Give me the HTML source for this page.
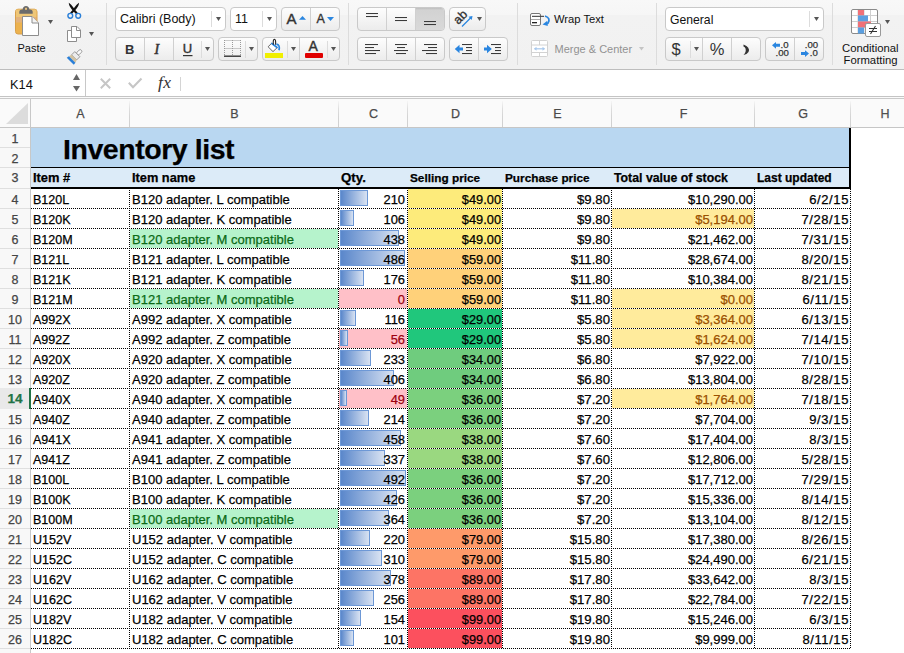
<!DOCTYPE html><html><head><meta charset="utf-8"><title>Inventory list</title><style>
body{margin:0;width:904px;height:653px;overflow:hidden;position:relative;background:#fff;font-family:"Liberation Sans",sans-serif;}
.a{position:absolute;}
.t{white-space:nowrap;line-height:20px;height:20px;-webkit-text-stroke:0.25px currentColor;}
.btn{position:absolute;box-sizing:border-box;border:1px solid #c9c9c9;border-radius:4px;background:linear-gradient(#fdfdfd,#ececec);}
.box{position:absolute;box-sizing:border-box;border:1px solid #c9c9c9;border-radius:4px;background:#fff;}
.dv{position:absolute;width:1px;background:#d0d0d0;}
svg{position:absolute;overflow:visible;}
</style></head><body>
<div class="a" style="left:0px;top:0px;width:904px;height:69px;background:linear-gradient(#f8f8f8 0,#f6f6f6 15px,#f2f2f2 15px,#f1f1f1 100%);"></div>
<div class="a" style="left:0px;top:69px;width:904px;height:1px;background:#bdbdbd;"></div>
<div class="a" style="left:106px;top:3px;width:1px;height:62px;background:#dcdcdc;"></div>
<div class="a" style="left:348px;top:3px;width:1px;height:62px;background:#dcdcdc;"></div>
<div class="a" style="left:517px;top:3px;width:1px;height:62px;background:#dcdcdc;"></div>
<div class="a" style="left:656px;top:3px;width:1px;height:62px;background:#dcdcdc;"></div>
<div class="a" style="left:832px;top:3px;width:1px;height:62px;background:#dcdcdc;"></div>
<div class="box" style="left:115px;top:7px;width:111px;height:24px;"></div>
<div class="box" style="left:230px;top:7px;width:47px;height:24px;"></div>
<div class="btn" style="left:281px;top:7px;width:59px;height:24px;"></div>
<div class="btn" style="left:115px;top:37px;width:99px;height:24px;"></div>
<div class="btn" style="left:218px;top:37px;width:40px;height:24px;"></div>
<div class="btn" style="left:262px;top:37px;width:78px;height:24px;"></div>
<div class="btn" style="left:357px;top:7px;width:88px;height:24px;"></div>
<div class="a" style="left:416px;top:8px;width:28px;height:22px;background:linear-gradient(#bdbdbd 0,#d2d2d2 2px,#d9d9d9 100%);border-radius:0 3px 3px 0;"></div>
<div class="btn" style="left:449px;top:7px;width:37px;height:24px;"></div>
<div class="btn" style="left:357px;top:37px;width:88px;height:24px;"></div>
<div class="btn" style="left:449px;top:37px;width:59px;height:24px;"></div>
<div class="box" style="left:665px;top:7px;width:159px;height:24px;"></div>
<div class="btn" style="left:665px;top:37px;width:96px;height:24px;"></div>
<div class="btn" style="left:765px;top:37px;width:59px;height:24px;"></div>
<div class="dv" style="left:144px;top:38px;height:22px;"></div>
<div class="dv" style="left:173px;top:38px;height:22px;"></div>
<div class="dv" style="left:310px;top:8px;height:22px;"></div>
<div class="dv" style="left:299px;top:38px;height:22px;"></div>
<div class="dv" style="left:386px;top:8px;height:22px;"></div>
<div class="dv" style="left:415px;top:8px;height:22px;"></div>
<div class="dv" style="left:386px;top:38px;height:22px;"></div>
<div class="dv" style="left:415px;top:38px;height:22px;"></div>
<div class="dv" style="left:478px;top:38px;height:22px;"></div>
<div class="dv" style="left:702px;top:38px;height:22px;"></div>
<div class="dv" style="left:731px;top:38px;height:22px;"></div>
<div class="dv" style="left:794px;top:38px;height:22px;"></div>
<div class="dv" style="left:201px;top:41px;height:17px;background:#dcdcdc"></div>
<div class="dv" style="left:245px;top:41px;height:17px;background:#dcdcdc"></div>
<div class="dv" style="left:287px;top:41px;height:17px;background:#dcdcdc"></div>
<div class="dv" style="left:327px;top:41px;height:17px;background:#dcdcdc"></div>
<div class="dv" style="left:690px;top:41px;height:17px;background:#dcdcdc"></div>
<div class="dv" style="left:211px;top:11px;height:16px;background:#dcdcdc"></div>
<div class="dv" style="left:262px;top:11px;height:16px;background:#dcdcdc"></div>
<div class="dv" style="left:809px;top:11px;height:16px;background:#dcdcdc"></div>
<svg style="left:0;top:0" width="904" height="69" viewBox="0 0 904 69">
<g fill="#555">
<polygon points="48,20 53,20 50.5,24"/>
<polygon points="89,32 94,32 91.5,36"/>
<polygon points="216,17 221,17 218.5,21"/>
<polygon points="267,17 272,17 269.5,21"/>
<polygon points="205,47 210,47 207.5,51"/>
<polygon points="249,47 254,47 251.5,51"/>
<polygon points="291,47 296,47 293.5,51"/>
<polygon points="331,47 336,47 333.5,51"/>
<polygon points="477,17 482,17 479.5,21"/>
<polygon points="694,47 699,47 696.5,51"/>
<polygon points="814,17 819,17 816.5,21"/>
<polygon points="885,20 890,20 887.5,24"/>
</g>
<polygon points="639,47 644,47 641.5,50.5" fill="#c4c4c4"/>
<!-- paste clipboard -->
<rect x="15.5" y="9.2" width="21.5" height="24.8" rx="2.5" fill="#ecb24e" stroke="#d9a04a" stroke-width="1"/>
<rect x="16" y="9.5" width="20.5" height="7.5" fill="#eec677"/>
<rect x="16" y="17" width="20.5" height="5.5" fill="#e2b27c"/>
<path d="M19.3,12.3 Q19.3,9.6 22,9.6 L22.6,9.6 Q23,6 26,6 Q29,6 29.4,9.6 L30,9.6 Q32.7,9.6 32.7,12.3 L32.7,13.8 L19.3,13.8 Z" fill="#6b6b6b"/>
<rect x="25" y="7.8" width="2" height="2" fill="#e8c07a"/>
<path d="M22.5,16.5 L32,16.5 L38.5,23 L38.5,35.5 L22.5,35.5 Z" fill="#fff" stroke="#8d8d8d" stroke-width="1"/>
<path d="M32,16.5 L32,23 L38.5,23" fill="#f3f3f3" stroke="#8d8d8d" stroke-width="1"/>
<!-- scissors -->
<path d="M68.8,2.8 C68.8,6.2 71.4,9.2 76,13.9 L77.7,12.7 C74,9 72.4,5.4 68.8,2.8 Z" fill="#111"/><path d="M79,2.8 C79,6.2 76.4,9.2 71.8,13.9 L70.1,12.7 C73.8,9 75.4,5.4 79,2.8 Z" fill="#111"/>
<circle cx="70.3" cy="15.8" r="2.4" fill="none" stroke="#2a7fd8" stroke-width="1.4"/>
<circle cx="78.2" cy="15.8" r="2.4" fill="none" stroke="#2a7fd8" stroke-width="1.4"/>
<!-- copy -->
<path d="M67.5,30.5 L76.5,30.5 L76.5,41.5 L67.5,41.5 Z" fill="#fff" stroke="#8d8d8d"/>
<path d="M71.5,26.5 L77,26.5 L80.5,30 L80.5,37.5 L71.5,37.5 Z" fill="#fff" stroke="#8d8d8d"/>
<path d="M76.5,26.8 L76.5,30.5 L80.2,30.5" fill="none" stroke="#8d8d8d"/>
<!-- brush -->
<g transform="translate(81.3,50.2) rotate(45)">
<rect x="-1.6" y="0" width="3.2" height="5.8" rx="1.4" fill="#fafafa" stroke="#8a8a8a" stroke-width="0.8"/>
<rect x="-3.6" y="5.6" width="7.2" height="4.6" fill="#ececec" stroke="#8a8a8a" stroke-width="0.8"/>
<path d="M-3.8,10.2 L3.8,10.2 L4.6,13 L-4.6,13 Z" fill="#d3c29f"/>
<path d="M-4.6,13 L4.6,13 L5,15.6 L-5,15.6 Z" fill="#2a7fd8"/>
</g>
<!-- B I U -->
<text x="125" y="53.5" font-family="Liberation Sans" font-weight="bold" font-size="13" fill="#333">B</text>
<text x="154.5" y="53.5" font-family="Liberation Serif" font-style="italic" font-size="14" fill="#333" stroke="#333" stroke-width="0.5">I</text>
<text x="182.8" y="53" font-family="Liberation Sans" font-size="13" fill="#333" stroke="#333" stroke-width="0.4">U</text>
<rect x="183" y="55" width="9.5" height="1.2" fill="#333"/>
<!-- borders icon -->
<path d="M224.5,40 V56 M240.5,40 V56 M224.5,40.5 H240.5 M232.5,40 V56 M224.5,48.5 H240.5" stroke="#9a9a9a" stroke-width="1" stroke-dasharray="1 1" fill="none"/>
<rect x="224" y="55.5" width="17" height="1.4" fill="#333"/>
<!-- A grow / shrink -->
<text x="286.5" y="24" font-family="Liberation Sans" font-size="15" fill="#333" stroke="#333" stroke-width="0.4">A</text>
<polygon points="299,19.8 306,19.8 302.5,16" fill="#2a86e0"/>
<text x="316.5" y="23" font-family="Liberation Sans" font-size="12.5" fill="#333" stroke="#333" stroke-width="0.35">A</text>
<polygon points="327,17 334,17 330.5,21" fill="#2a86e0"/>
<!-- fill bucket -->
<path d="M271.7,43.2 L277.2,47.6 L273,51.6 L268.1,46.8 Z" fill="#fff" stroke="#555" stroke-width="0.9"/>
<path d="M271.3,43.1 L277.5,47.9" stroke="#2a86e0" stroke-width="1.8"/>
<path d="M273.4,44.6 Q272.8,39.2 274.4,39.2 Q276,39.3 275.6,44.8" stroke="#222" stroke-width="1.1" fill="none"/>
<path d="M276.4,44.1 Q280.3,44.8 279,50.2" stroke="#2a86e0" stroke-width="1.7" fill="none"/>
<rect x="265" y="53" width="18" height="5" fill="#f0ef00"/>
<text x="308.5" y="51" font-family="Liberation Sans" font-size="14" fill="#333" stroke="#333" stroke-width="0.4">A</text>
<rect x="305" y="53" width="18" height="5" rx="1" fill="#e00000"/>
<!-- valign -->
<g fill="#3a3a3a">
<rect x="366" y="13" width="12" height="1.05"/><rect x="366" y="16" width="12" height="1.05"/>
<rect x="395" y="17" width="12" height="1.05"/><rect x="395" y="20" width="12" height="1.05"/>
<rect x="424" y="21" width="12" height="1.05"/><rect x="424" y="24" width="12" height="1.05"/>
<rect x="365" y="44" width="13" height="1.05"/><rect x="365" y="47" width="9" height="1.05"/><rect x="365" y="50" width="15" height="1.05"/><rect x="365" y="53" width="11" height="1.05"/>
<rect x="395" y="44" width="12" height="1.05"/><rect x="397" y="47" width="8" height="1.05"/><rect x="394" y="50" width="14" height="1.05"/><rect x="396" y="53" width="10" height="1.05"/>
<rect x="424" y="44" width="13" height="1.05"/><rect x="428" y="47" width="9" height="1.05"/><rect x="422" y="50" width="15" height="1.05"/><rect x="426" y="53" width="11" height="1.05"/>
<rect x="462" y="44" width="10" height="1.05"/><rect x="466" y="47" width="6" height="1.05"/><rect x="466" y="50" width="6" height="1.05"/><rect x="462" y="53" width="10" height="1.05"/>
<rect x="491" y="44" width="10" height="1.05"/><rect x="495" y="47" width="6" height="1.05"/><rect x="495" y="50" width="6" height="1.05"/><rect x="491" y="53" width="10" height="1.05"/>
</g>
<!-- orientation ab -->
<text x="0" y="0" font-family="Liberation Sans" font-size="12.5" fill="#333" stroke="#333" stroke-width="0.3" transform="translate(458.3,25) rotate(-45)">ab</text>
<path d="M462,26.5 L471.5,17" stroke="#2a86e0" stroke-width="1.2"/>
<polygon points="472.5,16 468.5,16.8 471.7,20" fill="#2a86e0"/>
<!-- indent arrows -->
<polygon points="454.8,49 459.5,44.8 459.5,47.5 463,47.5 463,50.5 459.5,50.5 459.5,53.2" fill="#2a86e0"/>
<polygon points="491.8,49 487,44.8 487,47.5 484,47.5 484,50.5 487,50.5 487,53.2" fill="#2a86e0"/>
<!-- wrap text icon -->
<rect x="530.5" y="13.5" width="10" height="12" rx="1.5" fill="#fff" stroke="#777"/>
<rect x="531" y="19" width="9" height="1" fill="#aaa"/>
<rect x="532" y="15.8" width="12" height="1.1" fill="#444"/>
<rect x="532" y="22" width="5" height="1.3" fill="#222"/>
<path d="M545,16 Q551,18 548,23 L546.5,24" stroke="#2a86e0" stroke-width="1.8" fill="none"/>
<polygon points="542.5,24.5 547,21 547.8,26" fill="#2a86e0"/>
<text x="554" y="23" font-family="Liberation Sans" font-size="11.2" fill="#111">Wrap Text</text>
<!-- merge icon -->
<rect x="531.5" y="40.5" width="16" height="16" rx="1" fill="#fff" stroke="#d2d2d2"/>
<path d="M532,45 H547 M532,52.5 H547 M539.5,41 V45 M539.5,52.5 V56" stroke="#d2d2d2"/>
<path d="M534.5,48.8 H544.5" stroke="#a8c8ec" stroke-width="1.2"/>
<polygon points="534,48.8 536.5,46.8 536.5,50.8" fill="#a8c8ec"/>
<polygon points="545,48.8 542.5,46.8 542.5,50.8" fill="#a8c8ec"/>
<text x="554.5" y="52.7" font-family="Liberation Sans" font-size="11" fill="#929292">Merge &amp; Center</text>
<!-- number group -->
<text x="671.5" y="55" font-family="Liberation Sans" font-size="16.5" fill="#333">$</text>
<text x="709.8" y="55.2" font-family="Liberation Sans" font-size="16.5" fill="#333">%</text>
<path d="M743.5,44.5 Q750.5,47 748.5,52 Q747,54.5 743.5,55 Q746.5,52 745.5,48.5 Q745,47 743.5,46.5 Z" fill="#333"/>
<!-- decimals -->
<polygon points="772,45.3 776,41.9 776,43.8 780,43.8 780,46.8 776,46.8 776,48.7" fill="#2a86e0"/>
<polygon points="809,53.6 805,50.2 805,52.1 801,52.1 801,55.1 805,55.1 805,57" fill="#2a86e0"/>
<g font-family="Liberation Sans" font-size="9.6" fill="#333" stroke="#333" stroke-width="0.25">
<text x="780.6" y="47.8">.0</text>
<text x="775.6" y="56.1">.00</text>
<text x="804.8" y="47.8">.00</text>
<text x="809.8" y="56.1">.0</text>
</g>
<!-- conditional formatting icon -->
<rect x="851.5" y="9.5" width="26" height="24" rx="1.5" fill="#fff" stroke="#8a8a8a"/>
<path d="M858,10 V33 M864,10 V33 M870.5,10 V33 M852,15.5 H877 M852,21.5 H877 M852,27.5 H877" stroke="#cfcfcf" stroke-width="1"/>
<rect x="858" y="10" width="6" height="5.5" fill="#f07178"/>
<rect x="858" y="15.5" width="10" height="6" fill="#5b9fe0"/>
<rect x="858" y="21.5" width="13" height="6" fill="#f07178"/>
<rect x="858" y="27.5" width="6" height="6" fill="#5b9fe0"/>
<rect x="865.5" y="23.5" width="15" height="13" rx="1.5" fill="#fff" stroke="#999"/>
<path d="M869,28.5 H877 M869,31.5 H877 M875.5,26 L870.5,34" stroke="#333" stroke-width="1.1"/>
<g font-family="Liberation Sans" font-size="11.3" fill="#111">
<text x="842" y="52.2">Conditional</text>
<text x="843.5" y="64">Formatting</text>
</g>
<text x="17.5" y="52" font-family="Liberation Sans" font-size="11" fill="#111">Paste</text>
</svg>
<div class="a" style="left:120px;top:7px;font-size:12.5px;line-height:24px;color:#111;">Calibri (Body)</div>
<div class="a" style="left:235px;top:7px;font-size:12.5px;line-height:24px;color:#111;">11</div>
<div class="a" style="left:670px;top:8px;font-size:12.2px;line-height:24px;color:#111;">General</div>

<div class="a" style="left:0px;top:70px;width:904px;height:26px;background:#fff;"></div>
<div class="a" style="left:85px;top:70px;width:1px;height:26px;background:#c8c8c8;"></div>
<div class="a" style="left:0px;top:96px;width:904px;height:1px;background:#c4c4c4;"></div>
<div class="a" style="left:0px;top:97px;width:904px;height:1px;background:#fafafa;"></div>
<div class="a" style="left:0px;top:98px;width:904px;height:1px;background:#c9c9c9;"></div>
<div class="a" style="left:10px;top:75px;font-size:12.8px;line-height:20px;color:#111;">K14</div>
<svg style="left:0;top:0" width="904" height="100">
<polygon points="73,80 80,80 76.5,74" fill="#666"/>
<polygon points="73,86 80,86 76.5,91.5" fill="#666"/>
<path d="M100.8,78.8 L110.2,88.2 M110.2,78.8 L100.8,88.2" stroke="#c6c6c6" stroke-width="2"/>
<path d="M128.8,82.8 L133,87.2 L141.5,78.6" stroke="#c6c6c6" stroke-width="2.1" fill="none"/>
<text x="158" y="87.5" font-family="Liberation Serif" font-style="italic" font-size="17.5" letter-spacing="0.3" fill="#333">fx</text>
<rect x="180" y="77" width="1" height="14" fill="#d4d4d4"/>
</svg>

<div class="a" style="left:0px;top:99px;width:904px;height:28px;background:#fafafa;"></div>
<div class="a" style="left:0px;top:127px;width:904px;height:1px;background:#c6c6c6;"></div>
<div class="a" style="left:30px;top:101px;width:1px;height:26px;background:linear-gradient(#f6f6f6,#dedede 30%,#d4d4d4 60%,#d0d0d0);"></div>
<div class="a" style="left:129px;top:101px;width:1px;height:26px;background:linear-gradient(#f6f6f6,#dedede 30%,#d4d4d4 60%,#d0d0d0);"></div>
<div class="a" style="left:338px;top:101px;width:1px;height:26px;background:linear-gradient(#f6f6f6,#dedede 30%,#d4d4d4 60%,#d0d0d0);"></div>
<div class="a" style="left:407px;top:101px;width:1px;height:26px;background:linear-gradient(#f6f6f6,#dedede 30%,#d4d4d4 60%,#d0d0d0);"></div>
<div class="a" style="left:502px;top:101px;width:1px;height:26px;background:linear-gradient(#f6f6f6,#dedede 30%,#d4d4d4 60%,#d0d0d0);"></div>
<div class="a" style="left:611px;top:101px;width:1px;height:26px;background:linear-gradient(#f6f6f6,#dedede 30%,#d4d4d4 60%,#d0d0d0);"></div>
<div class="a" style="left:754px;top:101px;width:1px;height:26px;background:linear-gradient(#f6f6f6,#dedede 30%,#d4d4d4 60%,#d0d0d0);"></div>
<div class="a" style="left:850px;top:101px;width:1px;height:26px;background:linear-gradient(#f6f6f6,#dedede 30%,#d4d4d4 60%,#d0d0d0);"></div>
<svg style="left:0;top:99px" width="30" height="28"><polygon points="28,4 28,25 6,25" fill="#dcdcdc"/></svg>
<div class="a t" style="left:31px;top:104px;font-size:12.5px;color:#4a4a4a;font-weight:normal;width:99px;text-align:center;">A</div>
<div class="a t" style="left:130px;top:104px;font-size:12.5px;color:#4a4a4a;font-weight:normal;width:209px;text-align:center;">B</div>
<div class="a t" style="left:339px;top:104px;font-size:12.5px;color:#4a4a4a;font-weight:normal;width:69px;text-align:center;">C</div>
<div class="a t" style="left:408px;top:104px;font-size:12.5px;color:#4a4a4a;font-weight:normal;width:95px;text-align:center;">D</div>
<div class="a t" style="left:503px;top:104px;font-size:12.5px;color:#4a4a4a;font-weight:normal;width:109px;text-align:center;">E</div>
<div class="a t" style="left:612px;top:104px;font-size:12.5px;color:#4a4a4a;font-weight:normal;width:143px;text-align:center;">F</div>
<div class="a t" style="left:755px;top:104px;font-size:12.5px;color:#4a4a4a;font-weight:normal;width:96px;text-align:center;">G</div>
<div class="a t" style="left:850px;top:104px;font-size:12.5px;color:#505050;font-weight:normal;width:70px;text-align:center;">H</div>
<div class="a" style="left:0px;top:128px;width:30px;height:525px;background:#f8f8f8;"></div>
<div class="a" style="left:30px;top:99px;width:1px;height:554px;background:#c8c8c8;"></div>
<div class="a" style="left:0px;top:147px;width:30px;height:1px;background:#dfdfdf;"></div>
<div class="a" style="left:0px;top:167px;width:30px;height:1px;background:#dfdfdf;"></div>
<div class="a" style="left:0px;top:188px;width:30px;height:1px;background:#dfdfdf;"></div>
<div class="a" style="left:0px;top:208px;width:30px;height:1px;background:#dfdfdf;"></div>
<div class="a" style="left:0px;top:228px;width:30px;height:1px;background:#dfdfdf;"></div>
<div class="a" style="left:0px;top:248px;width:30px;height:1px;background:#dfdfdf;"></div>
<div class="a" style="left:0px;top:268px;width:30px;height:1px;background:#dfdfdf;"></div>
<div class="a" style="left:0px;top:288px;width:30px;height:1px;background:#dfdfdf;"></div>
<div class="a" style="left:0px;top:308px;width:30px;height:1px;background:#dfdfdf;"></div>
<div class="a" style="left:0px;top:328px;width:30px;height:1px;background:#dfdfdf;"></div>
<div class="a" style="left:0px;top:348px;width:30px;height:1px;background:#dfdfdf;"></div>
<div class="a" style="left:0px;top:368px;width:30px;height:1px;background:#dfdfdf;"></div>
<div class="a" style="left:0px;top:388px;width:30px;height:1px;background:#dfdfdf;"></div>
<div class="a" style="left:0px;top:408px;width:30px;height:1px;background:#dfdfdf;"></div>
<div class="a" style="left:0px;top:428px;width:30px;height:1px;background:#dfdfdf;"></div>
<div class="a" style="left:0px;top:448px;width:30px;height:1px;background:#dfdfdf;"></div>
<div class="a" style="left:0px;top:468px;width:30px;height:1px;background:#dfdfdf;"></div>
<div class="a" style="left:0px;top:488px;width:30px;height:1px;background:#dfdfdf;"></div>
<div class="a" style="left:0px;top:508px;width:30px;height:1px;background:#dfdfdf;"></div>
<div class="a" style="left:0px;top:528px;width:30px;height:1px;background:#dfdfdf;"></div>
<div class="a" style="left:0px;top:548px;width:30px;height:1px;background:#dfdfdf;"></div>
<div class="a" style="left:0px;top:568px;width:30px;height:1px;background:#dfdfdf;"></div>
<div class="a" style="left:0px;top:588px;width:30px;height:1px;background:#dfdfdf;"></div>
<div class="a" style="left:0px;top:608px;width:30px;height:1px;background:#dfdfdf;"></div>
<div class="a" style="left:0px;top:628px;width:30px;height:1px;background:#dfdfdf;"></div>
<div class="a" style="left:0px;top:648px;width:30px;height:1px;background:#dfdfdf;"></div>
<div class="a t" style="left:0px;top:129px;font-size:12.5px;color:#454545;font-weight:normal;width:30px;text-align:center;">1</div>
<div class="a t" style="left:0px;top:149px;font-size:12.5px;color:#454545;font-weight:normal;width:30px;text-align:center;">2</div>
<div class="a t" style="left:0px;top:168px;font-size:12.5px;color:#454545;font-weight:normal;width:30px;text-align:center;">3</div>
<div class="a t" style="left:0px;top:190px;font-size:12.5px;color:#454545;font-weight:normal;width:30px;text-align:center;">4</div>
<div class="a t" style="left:0px;top:210px;font-size:12.5px;color:#454545;font-weight:normal;width:30px;text-align:center;">5</div>
<div class="a t" style="left:0px;top:230px;font-size:12.5px;color:#454545;font-weight:normal;width:30px;text-align:center;">6</div>
<div class="a t" style="left:0px;top:250px;font-size:12.5px;color:#454545;font-weight:normal;width:30px;text-align:center;">7</div>
<div class="a t" style="left:0px;top:270px;font-size:12.5px;color:#454545;font-weight:normal;width:30px;text-align:center;">8</div>
<div class="a t" style="left:0px;top:290px;font-size:12.5px;color:#454545;font-weight:normal;width:30px;text-align:center;">9</div>
<div class="a t" style="left:0px;top:310px;font-size:12.5px;color:#454545;font-weight:normal;width:30px;text-align:center;">10</div>
<div class="a t" style="left:0px;top:330px;font-size:12.5px;color:#454545;font-weight:normal;width:30px;text-align:center;">11</div>
<div class="a t" style="left:0px;top:350px;font-size:12.5px;color:#454545;font-weight:normal;width:30px;text-align:center;">12</div>
<div class="a t" style="left:0px;top:370px;font-size:12.5px;color:#454545;font-weight:normal;width:30px;text-align:center;">13</div>
<div class="a" style="left:0px;top:388px;width:30px;height:21px;background:#e9e9e9;"></div>
<div class="a" style="left:29px;top:388px;width:2px;height:21px;background:#217346;"></div>
<div class="a t" style="left:0px;top:389px;font-size:13.5px;color:#217346;font-weight:bold;width:30px;text-align:center;">14</div>
<div class="a t" style="left:0px;top:410px;font-size:12.5px;color:#454545;font-weight:normal;width:30px;text-align:center;">15</div>
<div class="a t" style="left:0px;top:430px;font-size:12.5px;color:#454545;font-weight:normal;width:30px;text-align:center;">16</div>
<div class="a t" style="left:0px;top:450px;font-size:12.5px;color:#454545;font-weight:normal;width:30px;text-align:center;">17</div>
<div class="a t" style="left:0px;top:470px;font-size:12.5px;color:#454545;font-weight:normal;width:30px;text-align:center;">18</div>
<div class="a t" style="left:0px;top:490px;font-size:12.5px;color:#454545;font-weight:normal;width:30px;text-align:center;">19</div>
<div class="a t" style="left:0px;top:510px;font-size:12.5px;color:#454545;font-weight:normal;width:30px;text-align:center;">20</div>
<div class="a t" style="left:0px;top:530px;font-size:12.5px;color:#454545;font-weight:normal;width:30px;text-align:center;">21</div>
<div class="a t" style="left:0px;top:550px;font-size:12.5px;color:#454545;font-weight:normal;width:30px;text-align:center;">22</div>
<div class="a t" style="left:0px;top:570px;font-size:12.5px;color:#454545;font-weight:normal;width:30px;text-align:center;">23</div>
<div class="a t" style="left:0px;top:590px;font-size:12.5px;color:#454545;font-weight:normal;width:30px;text-align:center;">24</div>
<div class="a t" style="left:0px;top:610px;font-size:12.5px;color:#454545;font-weight:normal;width:30px;text-align:center;">25</div>
<div class="a t" style="left:0px;top:630px;font-size:12.5px;color:#454545;font-weight:normal;width:30px;text-align:center;">26</div>
<div class="a" style="left:31px;top:128px;width:818px;height:39px;background:#b9d7f1;"></div>
<div class="a" style="left:31px;top:167px;width:819px;height:1px;background:#000;"></div>
<div class="a" style="left:31px;top:168px;width:818px;height:19px;background:#dcebf8;"></div>
<div class="a" style="left:31px;top:187px;width:820px;height:2px;background:#000;"></div>
<div class="a" style="left:849px;top:128px;width:2px;height:61px;background:#000;"></div>
<div class="a t" style="left:63px;top:132px;font-size:28.5px;color:#000;font-weight:bold;line-height:34px;height:34px;letter-spacing:-0.45px;">Inventory list</div>
<div class="a t" style="left:33px;top:168px;font-size:12.9px;color:#000;font-weight:bold;">Item #</div>
<div class="a t" style="left:132px;top:168px;font-size:12.8px;color:#000;font-weight:bold;">Item name</div>
<div class="a t" style="left:341px;top:168px;font-size:13.3px;color:#000;font-weight:bold;">Qty.</div>
<div class="a t" style="left:410px;top:168px;font-size:11.8px;color:#000;font-weight:bold;">Selling price</div>
<div class="a t" style="left:505px;top:168px;font-size:11.8px;color:#000;font-weight:bold;">Purchase price</div>
<div class="a t" style="left:614px;top:168px;font-size:12.3px;color:#000;font-weight:bold;">Total value of stock</div>
<div class="a t" style="left:757px;top:168px;font-size:12.0px;color:#000;font-weight:bold;">Last updated</div>
<div class="a" style="left:408px;top:189px;width:94px;height:19px;background:#fdeb7b;"></div>
<div class="a" style="left:340px;top:190px;width:28px;height:16px;box-sizing:border-box;border:1px solid #6d98d6;background:linear-gradient(90deg,#5a87cb,#d8e2f2)"></div>
<div class="a t" style="left:33px;top:190px;font-size:12.5px;color:#000;font-weight:normal;">B120L</div>
<div class="a t" style="left:132px;top:190px;font-size:13px;color:#000;font-weight:normal;">B120 adapter. L compatible</div>
<div class="a t" style="left:338px;top:190px;font-size:12.9px;color:#000;font-weight:normal;width:67px;text-align:right;">210</div>
<div class="a t" style="left:407px;top:190px;font-size:12.8px;color:#000;font-weight:normal;width:94px;text-align:right;">$49.00</div>
<div class="a t" style="left:502px;top:190px;font-size:13.2px;color:#000;font-weight:normal;width:108px;text-align:right;">$9.80</div>
<div class="a t" style="left:611px;top:190px;font-size:13px;color:#000;font-weight:normal;width:142px;text-align:right;">$10,290.00</div>
<div class="a t" style="left:754px;top:190px;font-size:13px;color:#000;font-weight:normal;width:95px;text-align:right;letter-spacing:0.6px;">6/2/15</div>
<div class="a" style="left:408px;top:209px;width:94px;height:19px;background:#fdeb7b;"></div>
<div class="a" style="left:612px;top:209px;width:142px;height:19px;background:#ffeb9c;"></div>
<div class="a" style="left:340px;top:210px;width:14px;height:16px;box-sizing:border-box;border:1px solid #6d98d6;background:linear-gradient(90deg,#5a87cb,#d8e2f2)"></div>
<div class="a t" style="left:33px;top:210px;font-size:12.5px;color:#000;font-weight:normal;">B120K</div>
<div class="a t" style="left:132px;top:210px;font-size:13px;color:#000;font-weight:normal;">B120 adapter. K compatible</div>
<div class="a t" style="left:338px;top:210px;font-size:12.9px;color:#000;font-weight:normal;width:67px;text-align:right;">106</div>
<div class="a t" style="left:407px;top:210px;font-size:12.8px;color:#000;font-weight:normal;width:94px;text-align:right;">$49.00</div>
<div class="a t" style="left:502px;top:210px;font-size:13.2px;color:#000;font-weight:normal;width:108px;text-align:right;">$9.80</div>
<div class="a t" style="left:611px;top:210px;font-size:13px;color:#9a5000;font-weight:normal;width:142px;text-align:right;">$5,194.00</div>
<div class="a t" style="left:754px;top:210px;font-size:13px;color:#000;font-weight:normal;width:95px;text-align:right;letter-spacing:0.6px;">7/28/15</div>
<div class="a" style="left:408px;top:229px;width:94px;height:19px;background:#fdeb7b;"></div>
<div class="a" style="left:130px;top:229px;width:208px;height:19px;background:#b6f3cc;"></div>
<div class="a" style="left:340px;top:230px;width:59px;height:16px;box-sizing:border-box;border:1px solid #6d98d6;background:linear-gradient(90deg,#5a87cb,#d8e2f2)"></div>
<div class="a t" style="left:33px;top:230px;font-size:12.5px;color:#000;font-weight:normal;">B120M</div>
<div class="a t" style="left:132px;top:230px;font-size:13px;color:#0b6a16;font-weight:normal;">B120 adapter. M compatible</div>
<div class="a t" style="left:338px;top:230px;font-size:12.9px;color:#000;font-weight:normal;width:67px;text-align:right;">438</div>
<div class="a t" style="left:407px;top:230px;font-size:12.8px;color:#000;font-weight:normal;width:94px;text-align:right;">$49.00</div>
<div class="a t" style="left:502px;top:230px;font-size:13.2px;color:#000;font-weight:normal;width:108px;text-align:right;">$9.80</div>
<div class="a t" style="left:611px;top:230px;font-size:13px;color:#000;font-weight:normal;width:142px;text-align:right;">$21,462.00</div>
<div class="a t" style="left:754px;top:230px;font-size:13px;color:#000;font-weight:normal;width:95px;text-align:right;letter-spacing:0.6px;">7/31/15</div>
<div class="a" style="left:408px;top:249px;width:94px;height:19px;background:#ffd17a;"></div>
<div class="a" style="left:340px;top:250px;width:65px;height:16px;box-sizing:border-box;border:1px solid #6d98d6;background:linear-gradient(90deg,#5a87cb,#d8e2f2)"></div>
<div class="a t" style="left:33px;top:250px;font-size:12.5px;color:#000;font-weight:normal;">B121L</div>
<div class="a t" style="left:132px;top:250px;font-size:13px;color:#000;font-weight:normal;">B121 adapter. L compatible</div>
<div class="a t" style="left:338px;top:250px;font-size:12.9px;color:#000;font-weight:normal;width:67px;text-align:right;">486</div>
<div class="a t" style="left:407px;top:250px;font-size:12.8px;color:#000;font-weight:normal;width:94px;text-align:right;">$59.00</div>
<div class="a t" style="left:502px;top:250px;font-size:13.2px;color:#000;font-weight:normal;width:108px;text-align:right;">$11.80</div>
<div class="a t" style="left:611px;top:250px;font-size:13px;color:#000;font-weight:normal;width:142px;text-align:right;">$28,674.00</div>
<div class="a t" style="left:754px;top:250px;font-size:13px;color:#000;font-weight:normal;width:95px;text-align:right;letter-spacing:0.6px;">8/20/15</div>
<div class="a" style="left:408px;top:269px;width:94px;height:19px;background:#ffd17a;"></div>
<div class="a" style="left:340px;top:270px;width:24px;height:16px;box-sizing:border-box;border:1px solid #6d98d6;background:linear-gradient(90deg,#5a87cb,#d8e2f2)"></div>
<div class="a t" style="left:33px;top:270px;font-size:12.5px;color:#000;font-weight:normal;">B121K</div>
<div class="a t" style="left:132px;top:270px;font-size:13px;color:#000;font-weight:normal;">B121 adapter. K compatible</div>
<div class="a t" style="left:338px;top:270px;font-size:12.9px;color:#000;font-weight:normal;width:67px;text-align:right;">176</div>
<div class="a t" style="left:407px;top:270px;font-size:12.8px;color:#000;font-weight:normal;width:94px;text-align:right;">$59.00</div>
<div class="a t" style="left:502px;top:270px;font-size:13.2px;color:#000;font-weight:normal;width:108px;text-align:right;">$11.80</div>
<div class="a t" style="left:611px;top:270px;font-size:13px;color:#000;font-weight:normal;width:142px;text-align:right;">$10,384.00</div>
<div class="a t" style="left:754px;top:270px;font-size:13px;color:#000;font-weight:normal;width:95px;text-align:right;letter-spacing:0.6px;">8/21/15</div>
<div class="a" style="left:408px;top:289px;width:94px;height:19px;background:#ffd17a;"></div>
<div class="a" style="left:130px;top:289px;width:208px;height:19px;background:#b6f3cc;"></div>
<div class="a" style="left:339px;top:289px;width:68px;height:19px;background:#ffc0c8;"></div>
<div class="a" style="left:612px;top:289px;width:142px;height:19px;background:#ffeb9c;"></div>
<div class="a t" style="left:33px;top:290px;font-size:12.5px;color:#000;font-weight:normal;">B121M</div>
<div class="a t" style="left:132px;top:290px;font-size:13px;color:#0b6a16;font-weight:normal;">B121 adapter. M compatible</div>
<div class="a t" style="left:338px;top:290px;font-size:12.9px;color:#9c0010;font-weight:normal;width:67px;text-align:right;">0</div>
<div class="a t" style="left:407px;top:290px;font-size:12.8px;color:#000;font-weight:normal;width:94px;text-align:right;">$59.00</div>
<div class="a t" style="left:502px;top:290px;font-size:13.2px;color:#000;font-weight:normal;width:108px;text-align:right;">$11.80</div>
<div class="a t" style="left:611px;top:290px;font-size:13px;color:#9a5000;font-weight:normal;width:142px;text-align:right;">$0.00</div>
<div class="a t" style="left:754px;top:290px;font-size:13px;color:#000;font-weight:normal;width:95px;text-align:right;letter-spacing:0.6px;">6/11/15</div>
<div class="a" style="left:408px;top:309px;width:94px;height:19px;background:#20c77c;"></div>
<div class="a" style="left:612px;top:309px;width:142px;height:19px;background:#ffeb9c;"></div>
<div class="a" style="left:340px;top:310px;width:16px;height:16px;box-sizing:border-box;border:1px solid #6d98d6;background:linear-gradient(90deg,#5a87cb,#d8e2f2)"></div>
<div class="a t" style="left:33px;top:310px;font-size:12.5px;color:#000;font-weight:normal;">A992X</div>
<div class="a t" style="left:132px;top:310px;font-size:13px;color:#000;font-weight:normal;">A992 adapter. X compatible</div>
<div class="a t" style="left:338px;top:310px;font-size:12.9px;color:#000;font-weight:normal;width:67px;text-align:right;">116</div>
<div class="a t" style="left:407px;top:310px;font-size:12.8px;color:#000;font-weight:normal;width:94px;text-align:right;">$29.00</div>
<div class="a t" style="left:502px;top:310px;font-size:13.2px;color:#000;font-weight:normal;width:108px;text-align:right;">$5.80</div>
<div class="a t" style="left:611px;top:310px;font-size:13px;color:#9a5000;font-weight:normal;width:142px;text-align:right;">$3,364.00</div>
<div class="a t" style="left:754px;top:310px;font-size:13px;color:#000;font-weight:normal;width:95px;text-align:right;letter-spacing:0.6px;">6/13/15</div>
<div class="a" style="left:408px;top:329px;width:94px;height:19px;background:#20c77c;"></div>
<div class="a" style="left:339px;top:329px;width:68px;height:19px;background:#ffc0c8;"></div>
<div class="a" style="left:612px;top:329px;width:142px;height:19px;background:#ffeb9c;"></div>
<div class="a" style="left:340px;top:330px;width:8px;height:16px;box-sizing:border-box;border:1px solid #6d98d6;background:linear-gradient(90deg,#5a87cb,#d8e2f2)"></div>
<div class="a t" style="left:33px;top:330px;font-size:12.5px;color:#000;font-weight:normal;">A992Z</div>
<div class="a t" style="left:132px;top:330px;font-size:13px;color:#000;font-weight:normal;">A992 adapter. Z compatible</div>
<div class="a t" style="left:338px;top:330px;font-size:12.9px;color:#9c0010;font-weight:normal;width:67px;text-align:right;">56</div>
<div class="a t" style="left:407px;top:330px;font-size:12.8px;color:#000;font-weight:normal;width:94px;text-align:right;">$29.00</div>
<div class="a t" style="left:502px;top:330px;font-size:13.2px;color:#000;font-weight:normal;width:108px;text-align:right;">$5.80</div>
<div class="a t" style="left:611px;top:330px;font-size:13px;color:#9a5000;font-weight:normal;width:142px;text-align:right;">$1,624.00</div>
<div class="a t" style="left:754px;top:330px;font-size:13px;color:#000;font-weight:normal;width:95px;text-align:right;letter-spacing:0.6px;">7/14/15</div>
<div class="a" style="left:408px;top:349px;width:94px;height:19px;background:#6fcc7e;"></div>
<div class="a" style="left:340px;top:350px;width:31px;height:16px;box-sizing:border-box;border:1px solid #6d98d6;background:linear-gradient(90deg,#5a87cb,#d8e2f2)"></div>
<div class="a t" style="left:33px;top:350px;font-size:12.5px;color:#000;font-weight:normal;">A920X</div>
<div class="a t" style="left:132px;top:350px;font-size:13px;color:#000;font-weight:normal;">A920 adapter. X compatible</div>
<div class="a t" style="left:338px;top:350px;font-size:12.9px;color:#000;font-weight:normal;width:67px;text-align:right;">233</div>
<div class="a t" style="left:407px;top:350px;font-size:12.8px;color:#000;font-weight:normal;width:94px;text-align:right;">$34.00</div>
<div class="a t" style="left:502px;top:350px;font-size:13.2px;color:#000;font-weight:normal;width:108px;text-align:right;">$6.80</div>
<div class="a t" style="left:611px;top:350px;font-size:13px;color:#000;font-weight:normal;width:142px;text-align:right;">$7,922.00</div>
<div class="a t" style="left:754px;top:350px;font-size:13px;color:#000;font-weight:normal;width:95px;text-align:right;letter-spacing:0.6px;">7/10/15</div>
<div class="a" style="left:408px;top:369px;width:94px;height:19px;background:#6fcc7e;"></div>
<div class="a" style="left:340px;top:370px;width:54px;height:16px;box-sizing:border-box;border:1px solid #6d98d6;background:linear-gradient(90deg,#5a87cb,#d8e2f2)"></div>
<div class="a t" style="left:33px;top:370px;font-size:12.5px;color:#000;font-weight:normal;">A920Z</div>
<div class="a t" style="left:132px;top:370px;font-size:13px;color:#000;font-weight:normal;">A920 adapter. Z compatible</div>
<div class="a t" style="left:338px;top:370px;font-size:12.9px;color:#000;font-weight:normal;width:67px;text-align:right;">406</div>
<div class="a t" style="left:407px;top:370px;font-size:12.8px;color:#000;font-weight:normal;width:94px;text-align:right;">$34.00</div>
<div class="a t" style="left:502px;top:370px;font-size:13.2px;color:#000;font-weight:normal;width:108px;text-align:right;">$6.80</div>
<div class="a t" style="left:611px;top:370px;font-size:13px;color:#000;font-weight:normal;width:142px;text-align:right;">$13,804.00</div>
<div class="a t" style="left:754px;top:370px;font-size:13px;color:#000;font-weight:normal;width:95px;text-align:right;letter-spacing:0.6px;">8/28/15</div>
<div class="a" style="left:408px;top:389px;width:94px;height:19px;background:#7bd07e;"></div>
<div class="a" style="left:339px;top:389px;width:68px;height:19px;background:#ffc0c8;"></div>
<div class="a" style="left:612px;top:389px;width:142px;height:19px;background:#ffeb9c;"></div>
<div class="a" style="left:340px;top:390px;width:7px;height:16px;box-sizing:border-box;border:1px solid #6d98d6;background:linear-gradient(90deg,#5a87cb,#d8e2f2)"></div>
<div class="a t" style="left:33px;top:390px;font-size:12.5px;color:#000;font-weight:normal;">A940X</div>
<div class="a t" style="left:132px;top:390px;font-size:13px;color:#000;font-weight:normal;">A940 adapter. X compatible</div>
<div class="a t" style="left:338px;top:390px;font-size:12.9px;color:#9c0010;font-weight:normal;width:67px;text-align:right;">49</div>
<div class="a t" style="left:407px;top:390px;font-size:12.8px;color:#000;font-weight:normal;width:94px;text-align:right;">$36.00</div>
<div class="a t" style="left:502px;top:390px;font-size:13.2px;color:#000;font-weight:normal;width:108px;text-align:right;">$7.20</div>
<div class="a t" style="left:611px;top:390px;font-size:13px;color:#9a5000;font-weight:normal;width:142px;text-align:right;">$1,764.00</div>
<div class="a t" style="left:754px;top:390px;font-size:13px;color:#000;font-weight:normal;width:95px;text-align:right;letter-spacing:0.6px;">7/18/15</div>
<div class="a" style="left:408px;top:409px;width:94px;height:19px;background:#7bd07e;"></div>
<div class="a" style="left:340px;top:410px;width:29px;height:16px;box-sizing:border-box;border:1px solid #6d98d6;background:linear-gradient(90deg,#5a87cb,#d8e2f2)"></div>
<div class="a t" style="left:33px;top:410px;font-size:12.5px;color:#000;font-weight:normal;">A940Z</div>
<div class="a t" style="left:132px;top:410px;font-size:13px;color:#000;font-weight:normal;">A940 adapter. Z compatible</div>
<div class="a t" style="left:338px;top:410px;font-size:12.9px;color:#000;font-weight:normal;width:67px;text-align:right;">214</div>
<div class="a t" style="left:407px;top:410px;font-size:12.8px;color:#000;font-weight:normal;width:94px;text-align:right;">$36.00</div>
<div class="a t" style="left:502px;top:410px;font-size:13.2px;color:#000;font-weight:normal;width:108px;text-align:right;">$7.20</div>
<div class="a t" style="left:611px;top:410px;font-size:13px;color:#000;font-weight:normal;width:142px;text-align:right;">$7,704.00</div>
<div class="a t" style="left:754px;top:410px;font-size:13px;color:#000;font-weight:normal;width:95px;text-align:right;letter-spacing:0.6px;">9/3/15</div>
<div class="a" style="left:408px;top:429px;width:94px;height:19px;background:#9ad880;"></div>
<div class="a" style="left:340px;top:430px;width:61px;height:16px;box-sizing:border-box;border:1px solid #6d98d6;background:linear-gradient(90deg,#5a87cb,#d8e2f2)"></div>
<div class="a t" style="left:33px;top:430px;font-size:12.5px;color:#000;font-weight:normal;">A941X</div>
<div class="a t" style="left:132px;top:430px;font-size:13px;color:#000;font-weight:normal;">A941 adapter. X compatible</div>
<div class="a t" style="left:338px;top:430px;font-size:12.9px;color:#000;font-weight:normal;width:67px;text-align:right;">458</div>
<div class="a t" style="left:407px;top:430px;font-size:12.8px;color:#000;font-weight:normal;width:94px;text-align:right;">$38.00</div>
<div class="a t" style="left:502px;top:430px;font-size:13.2px;color:#000;font-weight:normal;width:108px;text-align:right;">$7.60</div>
<div class="a t" style="left:611px;top:430px;font-size:13px;color:#000;font-weight:normal;width:142px;text-align:right;">$17,404.00</div>
<div class="a t" style="left:754px;top:430px;font-size:13px;color:#000;font-weight:normal;width:95px;text-align:right;letter-spacing:0.6px;">8/3/15</div>
<div class="a" style="left:408px;top:449px;width:94px;height:19px;background:#9ad880;"></div>
<div class="a" style="left:340px;top:450px;width:45px;height:16px;box-sizing:border-box;border:1px solid #6d98d6;background:linear-gradient(90deg,#5a87cb,#d8e2f2)"></div>
<div class="a t" style="left:33px;top:450px;font-size:12.5px;color:#000;font-weight:normal;">A941Z</div>
<div class="a t" style="left:132px;top:450px;font-size:13px;color:#000;font-weight:normal;">A941 adapter. Z compatible</div>
<div class="a t" style="left:338px;top:450px;font-size:12.9px;color:#000;font-weight:normal;width:67px;text-align:right;">337</div>
<div class="a t" style="left:407px;top:450px;font-size:12.8px;color:#000;font-weight:normal;width:94px;text-align:right;">$38.00</div>
<div class="a t" style="left:502px;top:450px;font-size:13.2px;color:#000;font-weight:normal;width:108px;text-align:right;">$7.60</div>
<div class="a t" style="left:611px;top:450px;font-size:13px;color:#000;font-weight:normal;width:142px;text-align:right;">$12,806.00</div>
<div class="a t" style="left:754px;top:450px;font-size:13px;color:#000;font-weight:normal;width:95px;text-align:right;letter-spacing:0.6px;">5/28/15</div>
<div class="a" style="left:408px;top:469px;width:94px;height:19px;background:#7bd07e;"></div>
<div class="a" style="left:340px;top:470px;width:66px;height:16px;box-sizing:border-box;border:1px solid #6d98d6;background:linear-gradient(90deg,#5a87cb,#d8e2f2)"></div>
<div class="a t" style="left:33px;top:470px;font-size:12.5px;color:#000;font-weight:normal;">B100L</div>
<div class="a t" style="left:132px;top:470px;font-size:13px;color:#000;font-weight:normal;">B100 adapter. L compatible</div>
<div class="a t" style="left:338px;top:470px;font-size:12.9px;color:#000;font-weight:normal;width:67px;text-align:right;">492</div>
<div class="a t" style="left:407px;top:470px;font-size:12.8px;color:#000;font-weight:normal;width:94px;text-align:right;">$36.00</div>
<div class="a t" style="left:502px;top:470px;font-size:13.2px;color:#000;font-weight:normal;width:108px;text-align:right;">$7.20</div>
<div class="a t" style="left:611px;top:470px;font-size:13px;color:#000;font-weight:normal;width:142px;text-align:right;">$17,712.00</div>
<div class="a t" style="left:754px;top:470px;font-size:13px;color:#000;font-weight:normal;width:95px;text-align:right;letter-spacing:0.6px;">7/29/15</div>
<div class="a" style="left:408px;top:489px;width:94px;height:19px;background:#7bd07e;"></div>
<div class="a" style="left:340px;top:490px;width:57px;height:16px;box-sizing:border-box;border:1px solid #6d98d6;background:linear-gradient(90deg,#5a87cb,#d8e2f2)"></div>
<div class="a t" style="left:33px;top:490px;font-size:12.5px;color:#000;font-weight:normal;">B100K</div>
<div class="a t" style="left:132px;top:490px;font-size:13px;color:#000;font-weight:normal;">B100 adapter. K compatible</div>
<div class="a t" style="left:338px;top:490px;font-size:12.9px;color:#000;font-weight:normal;width:67px;text-align:right;">426</div>
<div class="a t" style="left:407px;top:490px;font-size:12.8px;color:#000;font-weight:normal;width:94px;text-align:right;">$36.00</div>
<div class="a t" style="left:502px;top:490px;font-size:13.2px;color:#000;font-weight:normal;width:108px;text-align:right;">$7.20</div>
<div class="a t" style="left:611px;top:490px;font-size:13px;color:#000;font-weight:normal;width:142px;text-align:right;">$15,336.00</div>
<div class="a t" style="left:754px;top:490px;font-size:13px;color:#000;font-weight:normal;width:95px;text-align:right;letter-spacing:0.6px;">8/14/15</div>
<div class="a" style="left:408px;top:509px;width:94px;height:19px;background:#7bd07e;"></div>
<div class="a" style="left:130px;top:509px;width:208px;height:19px;background:#b6f3cc;"></div>
<div class="a" style="left:340px;top:510px;width:49px;height:16px;box-sizing:border-box;border:1px solid #6d98d6;background:linear-gradient(90deg,#5a87cb,#d8e2f2)"></div>
<div class="a t" style="left:33px;top:510px;font-size:12.5px;color:#000;font-weight:normal;">B100M</div>
<div class="a t" style="left:132px;top:510px;font-size:13px;color:#0b6a16;font-weight:normal;">B100 adapter. M compatible</div>
<div class="a t" style="left:338px;top:510px;font-size:12.9px;color:#000;font-weight:normal;width:67px;text-align:right;">364</div>
<div class="a t" style="left:407px;top:510px;font-size:12.8px;color:#000;font-weight:normal;width:94px;text-align:right;">$36.00</div>
<div class="a t" style="left:502px;top:510px;font-size:13.2px;color:#000;font-weight:normal;width:108px;text-align:right;">$7.20</div>
<div class="a t" style="left:611px;top:510px;font-size:13px;color:#000;font-weight:normal;width:142px;text-align:right;">$13,104.00</div>
<div class="a t" style="left:754px;top:510px;font-size:13px;color:#000;font-weight:normal;width:95px;text-align:right;letter-spacing:0.6px;">8/12/15</div>
<div class="a" style="left:408px;top:529px;width:94px;height:19px;background:#fe9a6a;"></div>
<div class="a" style="left:340px;top:530px;width:30px;height:16px;box-sizing:border-box;border:1px solid #6d98d6;background:linear-gradient(90deg,#5a87cb,#d8e2f2)"></div>
<div class="a t" style="left:33px;top:530px;font-size:12.5px;color:#000;font-weight:normal;">U152V</div>
<div class="a t" style="left:132px;top:530px;font-size:13px;color:#000;font-weight:normal;">U152 adapter. V compatible</div>
<div class="a t" style="left:338px;top:530px;font-size:12.9px;color:#000;font-weight:normal;width:67px;text-align:right;">220</div>
<div class="a t" style="left:407px;top:530px;font-size:12.8px;color:#000;font-weight:normal;width:94px;text-align:right;">$79.00</div>
<div class="a t" style="left:502px;top:530px;font-size:13.2px;color:#000;font-weight:normal;width:108px;text-align:right;">$15.80</div>
<div class="a t" style="left:611px;top:530px;font-size:13px;color:#000;font-weight:normal;width:142px;text-align:right;">$17,380.00</div>
<div class="a t" style="left:754px;top:530px;font-size:13px;color:#000;font-weight:normal;width:95px;text-align:right;letter-spacing:0.6px;">8/26/15</div>
<div class="a" style="left:408px;top:549px;width:94px;height:19px;background:#fe9a6a;"></div>
<div class="a" style="left:340px;top:550px;width:42px;height:16px;box-sizing:border-box;border:1px solid #6d98d6;background:linear-gradient(90deg,#5a87cb,#d8e2f2)"></div>
<div class="a t" style="left:33px;top:550px;font-size:12.5px;color:#000;font-weight:normal;">U152C</div>
<div class="a t" style="left:132px;top:550px;font-size:13px;color:#000;font-weight:normal;">U152 adapter. C compatible</div>
<div class="a t" style="left:338px;top:550px;font-size:12.9px;color:#000;font-weight:normal;width:67px;text-align:right;">310</div>
<div class="a t" style="left:407px;top:550px;font-size:12.8px;color:#000;font-weight:normal;width:94px;text-align:right;">$79.00</div>
<div class="a t" style="left:502px;top:550px;font-size:13.2px;color:#000;font-weight:normal;width:108px;text-align:right;">$15.80</div>
<div class="a t" style="left:611px;top:550px;font-size:13px;color:#000;font-weight:normal;width:142px;text-align:right;">$24,490.00</div>
<div class="a t" style="left:754px;top:550px;font-size:13px;color:#000;font-weight:normal;width:95px;text-align:right;letter-spacing:0.6px;">6/21/15</div>
<div class="a" style="left:408px;top:569px;width:94px;height:19px;background:#fd7465;"></div>
<div class="a" style="left:340px;top:570px;width:51px;height:16px;box-sizing:border-box;border:1px solid #6d98d6;background:linear-gradient(90deg,#5a87cb,#d8e2f2)"></div>
<div class="a t" style="left:33px;top:570px;font-size:12.5px;color:#000;font-weight:normal;">U162V</div>
<div class="a t" style="left:132px;top:570px;font-size:13px;color:#000;font-weight:normal;">U162 adapter. C compatible</div>
<div class="a t" style="left:338px;top:570px;font-size:12.9px;color:#000;font-weight:normal;width:67px;text-align:right;">378</div>
<div class="a t" style="left:407px;top:570px;font-size:12.8px;color:#000;font-weight:normal;width:94px;text-align:right;">$89.00</div>
<div class="a t" style="left:502px;top:570px;font-size:13.2px;color:#000;font-weight:normal;width:108px;text-align:right;">$17.80</div>
<div class="a t" style="left:611px;top:570px;font-size:13px;color:#000;font-weight:normal;width:142px;text-align:right;">$33,642.00</div>
<div class="a t" style="left:754px;top:570px;font-size:13px;color:#000;font-weight:normal;width:95px;text-align:right;letter-spacing:0.6px;">8/3/15</div>
<div class="a" style="left:408px;top:589px;width:94px;height:19px;background:#fd7465;"></div>
<div class="a" style="left:340px;top:590px;width:34px;height:16px;box-sizing:border-box;border:1px solid #6d98d6;background:linear-gradient(90deg,#5a87cb,#d8e2f2)"></div>
<div class="a t" style="left:33px;top:590px;font-size:12.5px;color:#000;font-weight:normal;">U162C</div>
<div class="a t" style="left:132px;top:590px;font-size:13px;color:#000;font-weight:normal;">U162 adapter. V compatible</div>
<div class="a t" style="left:338px;top:590px;font-size:12.9px;color:#000;font-weight:normal;width:67px;text-align:right;">256</div>
<div class="a t" style="left:407px;top:590px;font-size:12.8px;color:#000;font-weight:normal;width:94px;text-align:right;">$89.00</div>
<div class="a t" style="left:502px;top:590px;font-size:13.2px;color:#000;font-weight:normal;width:108px;text-align:right;">$17.80</div>
<div class="a t" style="left:611px;top:590px;font-size:13px;color:#000;font-weight:normal;width:142px;text-align:right;">$22,784.00</div>
<div class="a t" style="left:754px;top:590px;font-size:13px;color:#000;font-weight:normal;width:95px;text-align:right;letter-spacing:0.6px;">7/22/15</div>
<div class="a" style="left:408px;top:609px;width:94px;height:19px;background:#fc505e;"></div>
<div class="a" style="left:340px;top:610px;width:21px;height:16px;box-sizing:border-box;border:1px solid #6d98d6;background:linear-gradient(90deg,#5a87cb,#d8e2f2)"></div>
<div class="a t" style="left:33px;top:610px;font-size:12.5px;color:#000;font-weight:normal;">U182V</div>
<div class="a t" style="left:132px;top:610px;font-size:13px;color:#000;font-weight:normal;">U182 adapter. V compatible</div>
<div class="a t" style="left:338px;top:610px;font-size:12.9px;color:#000;font-weight:normal;width:67px;text-align:right;">154</div>
<div class="a t" style="left:407px;top:610px;font-size:12.8px;color:#000;font-weight:normal;width:94px;text-align:right;">$99.00</div>
<div class="a t" style="left:502px;top:610px;font-size:13.2px;color:#000;font-weight:normal;width:108px;text-align:right;">$19.80</div>
<div class="a t" style="left:611px;top:610px;font-size:13px;color:#000;font-weight:normal;width:142px;text-align:right;">$15,246.00</div>
<div class="a t" style="left:754px;top:610px;font-size:13px;color:#000;font-weight:normal;width:95px;text-align:right;letter-spacing:0.6px;">6/3/15</div>
<div class="a" style="left:408px;top:629px;width:94px;height:19px;background:#fc505e;"></div>
<div class="a" style="left:340px;top:630px;width:14px;height:16px;box-sizing:border-box;border:1px solid #6d98d6;background:linear-gradient(90deg,#5a87cb,#d8e2f2)"></div>
<div class="a t" style="left:33px;top:630px;font-size:12.5px;color:#000;font-weight:normal;">U182C</div>
<div class="a t" style="left:132px;top:630px;font-size:13px;color:#000;font-weight:normal;">U182 adapter. C compatible</div>
<div class="a t" style="left:338px;top:630px;font-size:12.9px;color:#000;font-weight:normal;width:67px;text-align:right;">101</div>
<div class="a t" style="left:407px;top:630px;font-size:12.8px;color:#000;font-weight:normal;width:94px;text-align:right;">$99.00</div>
<div class="a t" style="left:502px;top:630px;font-size:13.2px;color:#000;font-weight:normal;width:108px;text-align:right;">$19.80</div>
<div class="a t" style="left:611px;top:630px;font-size:13px;color:#000;font-weight:normal;width:142px;text-align:right;">$9,999.00</div>
<div class="a t" style="left:754px;top:630px;font-size:13px;color:#000;font-weight:normal;width:95px;text-align:right;letter-spacing:0.6px;">8/11/15</div>
<div class="a" style="left:31px;top:208px;width:820px;height:1px;background:repeating-linear-gradient(90deg,#000 0 1px,#fff 1px 2px)"></div>
<div class="a" style="left:31px;top:228px;width:820px;height:1px;background:repeating-linear-gradient(90deg,#000 0 1px,#fff 1px 2px)"></div>
<div class="a" style="left:31px;top:248px;width:820px;height:1px;background:repeating-linear-gradient(90deg,#000 0 1px,#fff 1px 2px)"></div>
<div class="a" style="left:31px;top:268px;width:820px;height:1px;background:repeating-linear-gradient(90deg,#000 0 1px,#fff 1px 2px)"></div>
<div class="a" style="left:31px;top:288px;width:820px;height:1px;background:repeating-linear-gradient(90deg,#000 0 1px,#fff 1px 2px)"></div>
<div class="a" style="left:31px;top:308px;width:820px;height:1px;background:repeating-linear-gradient(90deg,#000 0 1px,#fff 1px 2px)"></div>
<div class="a" style="left:31px;top:328px;width:820px;height:1px;background:repeating-linear-gradient(90deg,#000 0 1px,#fff 1px 2px)"></div>
<div class="a" style="left:31px;top:348px;width:820px;height:1px;background:repeating-linear-gradient(90deg,#000 0 1px,#fff 1px 2px)"></div>
<div class="a" style="left:31px;top:368px;width:820px;height:1px;background:repeating-linear-gradient(90deg,#000 0 1px,#fff 1px 2px)"></div>
<div class="a" style="left:31px;top:388px;width:820px;height:1px;background:repeating-linear-gradient(90deg,#000 0 1px,#fff 1px 2px)"></div>
<div class="a" style="left:31px;top:408px;width:820px;height:1px;background:repeating-linear-gradient(90deg,#000 0 1px,#fff 1px 2px)"></div>
<div class="a" style="left:31px;top:428px;width:820px;height:1px;background:repeating-linear-gradient(90deg,#000 0 1px,#fff 1px 2px)"></div>
<div class="a" style="left:31px;top:448px;width:820px;height:1px;background:repeating-linear-gradient(90deg,#000 0 1px,#fff 1px 2px)"></div>
<div class="a" style="left:31px;top:468px;width:820px;height:1px;background:repeating-linear-gradient(90deg,#000 0 1px,#fff 1px 2px)"></div>
<div class="a" style="left:31px;top:488px;width:820px;height:1px;background:repeating-linear-gradient(90deg,#000 0 1px,#fff 1px 2px)"></div>
<div class="a" style="left:31px;top:508px;width:820px;height:1px;background:repeating-linear-gradient(90deg,#000 0 1px,#fff 1px 2px)"></div>
<div class="a" style="left:31px;top:528px;width:820px;height:1px;background:repeating-linear-gradient(90deg,#000 0 1px,#fff 1px 2px)"></div>
<div class="a" style="left:31px;top:548px;width:820px;height:1px;background:repeating-linear-gradient(90deg,#000 0 1px,#fff 1px 2px)"></div>
<div class="a" style="left:31px;top:568px;width:820px;height:1px;background:repeating-linear-gradient(90deg,#000 0 1px,#fff 1px 2px)"></div>
<div class="a" style="left:31px;top:588px;width:820px;height:1px;background:repeating-linear-gradient(90deg,#000 0 1px,#fff 1px 2px)"></div>
<div class="a" style="left:31px;top:608px;width:820px;height:1px;background:repeating-linear-gradient(90deg,#000 0 1px,#fff 1px 2px)"></div>
<div class="a" style="left:31px;top:628px;width:820px;height:1px;background:repeating-linear-gradient(90deg,#000 0 1px,#fff 1px 2px)"></div>
<div class="a" style="left:31px;top:648px;width:820px;height:1px;background:repeating-linear-gradient(90deg,#000 0 1px,#fff 1px 2px)"></div>
<div class="a" style="left:129px;top:189px;width:1px;height:460px;background:repeating-linear-gradient(180deg,#fff 0 1px,#000 1px 2px)"></div>
<div class="a" style="left:338px;top:189px;width:1px;height:460px;background:repeating-linear-gradient(180deg,#000 0 1px,#fff 1px 2px)"></div>
<div class="a" style="left:407px;top:189px;width:1px;height:460px;background:repeating-linear-gradient(180deg,#fff 0 1px,#000 1px 2px)"></div>
<div class="a" style="left:502px;top:189px;width:1px;height:460px;background:repeating-linear-gradient(180deg,#000 0 1px,#fff 1px 2px)"></div>
<div class="a" style="left:611px;top:189px;width:1px;height:460px;background:repeating-linear-gradient(180deg,#fff 0 1px,#000 1px 2px)"></div>
<div class="a" style="left:754px;top:189px;width:1px;height:460px;background:repeating-linear-gradient(180deg,#000 0 1px,#fff 1px 2px)"></div>
<div class="a" style="left:850px;top:189px;width:1px;height:460px;background:repeating-linear-gradient(180deg,#000 0 1px,#fff 1px 2px)"></div>
</body></html>
